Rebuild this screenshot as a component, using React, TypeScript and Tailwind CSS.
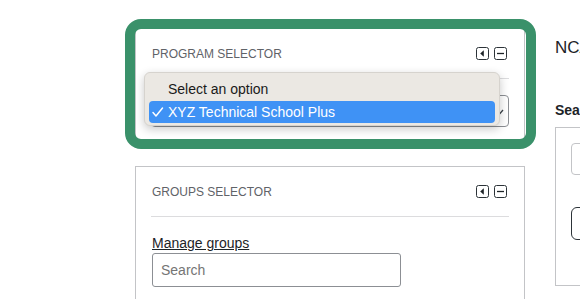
import React from 'react';

function ArrowBox() {
  return (
    <svg width="13" height="13" viewBox="0 0 13 13">
      <rect x="0.5" y="0.5" width="12" height="12" rx="2" fill="#fff" stroke="#2c3338" />
      <path d="M7.8 3.2 L4.2 6.5 L7.8 9.8 Z" fill="#1d2327" />
    </svg>
  );
}

function MinusBox() {
  return (
    <svg width="13" height="13" viewBox="0 0 13 13">
      <rect x="0.5" y="0.5" width="12" height="12" rx="2" fill="#fff" stroke="#2c3338" />
      <path d="M3 6.5 H10" stroke="#1d2327" strokeWidth="1.3" />
    </svg>
  );
}

function PanelHeader({ title }: { title: string }) {
  return (
    <div className="flex h-[50px] items-center justify-between border-b border-[#dcdcde]">
      <span className="pl-[1px] text-[12px] text-[#5f6368]">{title}</span>
      <div className="mr-[2px] flex items-center gap-[5px]">
        <ArrowBox />
        <MinusBox />
      </div>
    </div>
  );
}

export default function App() {
  return (
    <div className="h-[299px] w-[580px] overflow-hidden bg-white font-['Liberation_Sans',Arial,sans-serif] text-[#1d2327]">
      <div className="flex gap-[30px] pl-[135px] pt-[28px]">
        {/* left column */}
        <div className="flex w-[390px] shrink-0 flex-col gap-[22px]">
          {/* program selector */}
          <div className="relative border border-[#c3c4c7] bg-white px-[15px]">
            <PanelHeader title="PROGRAM SELECTOR" />
            <div className="py-[16px]">
              <div className="relative h-[32px] rounded-[4px] border border-[#8c8f94] bg-white">
                <svg className="absolute right-[4px] top-[13px]" width="8" height="6" viewBox="0 0 8 6">
                  <path d="M1 1 L4 4.5 L7 1" fill="none" stroke="#3c434a" strokeWidth="1.3" />
                </svg>
              </div>
            </div>

            {/* native dropdown popup */}
            <div className="absolute left-[8px] top-[43px] z-10 flex h-[54px] w-[356px] flex-col gap-[1px] rounded-[6px] border border-[#d6d3ce] bg-[#ebe8e3] px-[4px] pt-[5px] shadow-[0_3px_10px_rgba(0,0,0,0.22)]">
              <div className="flex h-[22px] items-center pl-[19px] text-[14px] text-[#1a1a1a]">Select an option</div>
              <div className="flex h-[22px] items-center rounded-[4px] bg-[#3f92f5] pl-[2px] text-[14px] text-white">
                <svg width="14" height="12" viewBox="0 0 14 12" className="mr-[3px]">
                  <path d="M2 6.5 L5 10 L11.5 2" fill="none" stroke="#fff" strokeWidth="1.5" strokeLinecap="round" strokeLinejoin="round" />
                </svg>
                XYZ Technical School Plus
              </div>
            </div>

            {/* highlight ring */}
            <div className="pointer-events-none absolute -bottom-[6px] -left-[11px] -right-[12px] -top-[10px] z-20 rounded-[16px] border-[10px] border-[#3a916a]" />
          </div>

          {/* groups selector */}
          <div className="border border-[#c3c4c7] bg-white px-[15px] pb-[20px]">
            <PanelHeader title="GROUPS SELECTOR" />
            <div className="pl-[1px] pt-[16px]">
              <a className="block h-[20px] text-[14px] leading-[20px] text-[#1d2327] underline">Manage groups</a>
              <div className="flex h-[34px] w-[249px] items-center rounded-[3px] border border-[#8c8f94] px-[8px] text-[14px] text-[#757575]">
                Search
              </div>
            </div>
          </div>
        </div>

        {/* right column */}
        <div className="w-[300px] shrink-0 pt-[8px]">
          <div className="h-[24px] text-[17px] leading-[24px] text-[#1d2327]">NCAA Eligibility</div>
          <div className="mt-[40px] h-[20px] text-[14px] font-bold leading-[20px]">Search</div>
          <div className="mt-[7px] flex h-[159px] flex-col border border-[#c3c4c7] px-[15px] pt-[15px]">
            <div className="h-[32px] w-[200px] rounded-[4px] border border-[#c3c4c7]" />
            <div className="mt-[32px] h-[33px] w-[100px] rounded-[6px] border border-[#2c3338]" />
          </div>
        </div>
      </div>
    </div>
  );
}
